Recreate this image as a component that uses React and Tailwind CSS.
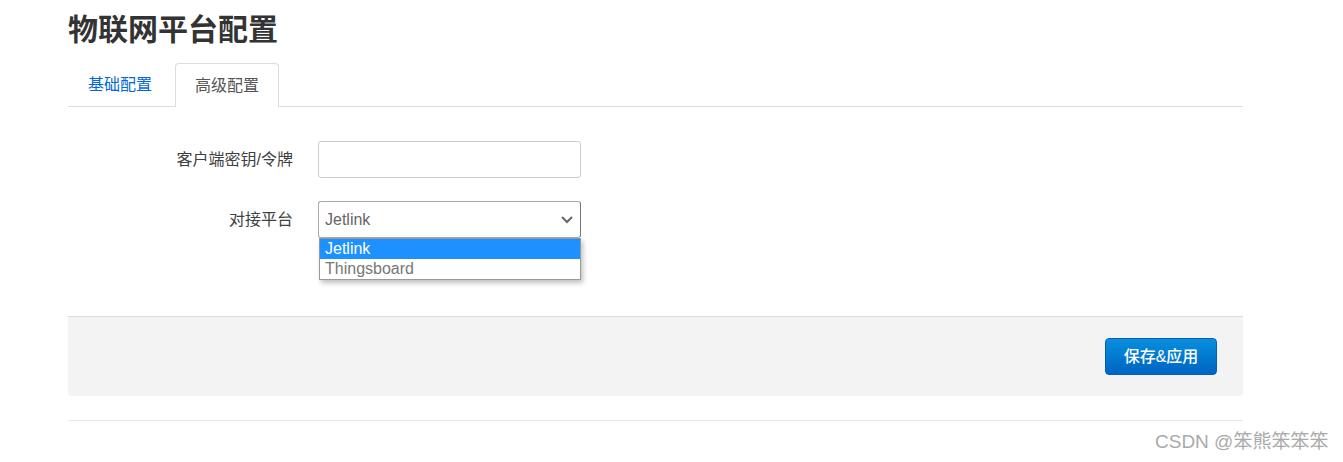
import { useState } from "react";

const font = "font-['Liberation_Sans','Noto_Sans_CJK_SC',sans-serif]";

const Chevron = () => (
  <svg width="14" height="10" viewBox="0 0 14 10" className="text-[#666]">
    <polyline points="2,2 7,7 12,2" fill="none" stroke="currentColor" strokeWidth="2" />
  </svg>
);

const FormRow = ({ label, children }) => (
  <div className="flex items-center">
    <label className="w-[225px] pr-0 text-right text-[16px] text-[#404040]">{label}</label>
    <div className="ml-[25px]">{children}</div>
  </div>
);

export default function App() {
  const [platform] = useState("Jetlink");
  const options = ["Jetlink", "Thingsboard"];

  return (
    <div className={`relative min-h-[462px] bg-white ${font}`}>
      <div className="ml-[68px] w-[1175px]">
        <h2 className="pt-[10px] text-[30px] font-bold leading-[40px] text-[#333]">物联网平台配置</h2>

        <ul className="mt-[13px] flex border-b border-[#ddd] text-[16px]">
          <li className="mr-[3px] flex h-[43px] items-center px-[20px] text-[#0069d6]">基础配置</li>
          <li className="-mb-px flex h-[44px] items-center rounded-t-[4px] border border-b-0 border-[#ddd] bg-white px-[19px] text-[#555]">
            高级配置
          </li>
        </ul>

        <div className="flex flex-col gap-[23px] pt-[34px]">
          <FormRow label="客户端密钥/令牌">
            <input
              type="text"
              className="h-[37px] w-[263px] rounded-[3px] border border-[#ccc] bg-white px-[6px] text-[16px] outline-none"
            />
          </FormRow>

          <FormRow label="对接平台">
            <div className="relative">
              <div className="flex h-[37px] w-[263px] items-center justify-between rounded-[3px] border border-[#aaa] border-r-[#777] bg-white pl-[6px] pr-[6px] text-[16px] text-[#666]">
                <span>{platform}</span>
                <Chevron />
              </div>
              <ul className="absolute left-[1px] top-[37px] z-10 w-[262px] border border-[#999] bg-white text-[16px] leading-[20px] shadow-[2px_3px_5px_rgba(0,0,0,0.25)]">
                {options.map((o) => (
                  <li
                    key={o}
                    className={
                      o === platform
                        ? "bg-[#1e90ff] px-[5px] text-white"
                        : "px-[5px] text-[#777]"
                    }
                  >
                    {o}
                  </li>
                ))}
              </ul>
            </div>
          </FormRow>
        </div>

        <div className="mt-[78px] flex h-[80px] items-center justify-end rounded-b-[4px] border-t border-[#ddd] bg-[#f3f3f3] pr-[26px]">
          <button className="h-[37px] w-[112px] rounded-[4px] border border-[#0560b5] bg-gradient-to-b from-[#0a8fdd] to-[#0064c2] text-[16px] font-medium text-white">
            保存&amp;应用
          </button>
        </div>

        <div className="mt-[24px] border-t border-[#e8e8e8]" />
      </div>

      <div className="absolute left-[1155px] top-[428px] text-[19px] text-[#aaa]">CSDN @笨熊笨笨笨</div>
    </div>
  );
}
